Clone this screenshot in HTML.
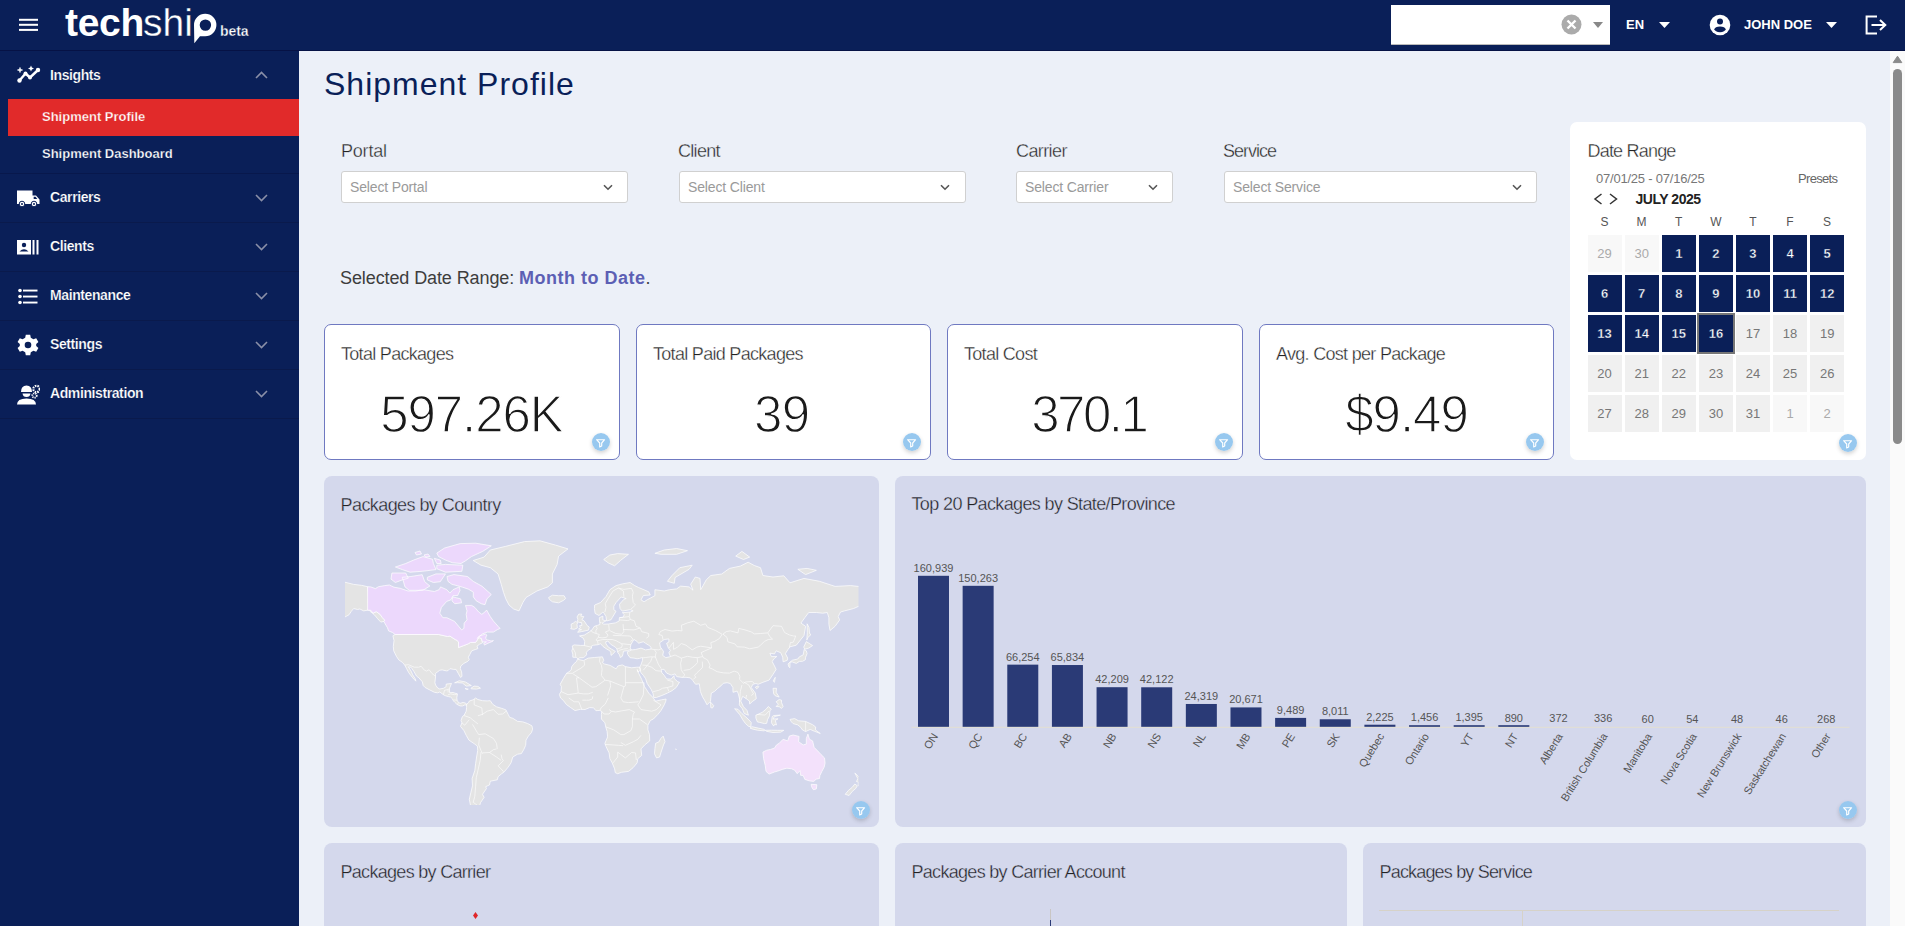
<!DOCTYPE html>
<html><head><meta charset="utf-8"><style>
*{box-sizing:border-box;margin:0;padding:0}
html,body{width:1905px;height:926px;overflow:hidden;background:#ecf0f8;font-family:"Liberation Sans",sans-serif}
.abs{position:absolute}
#hdr{position:absolute;left:0;top:0;width:1905px;height:51px;background:#0a1f58;border-bottom:1px solid #061245}
#side{position:absolute;left:0;top:51px;width:299px;height:875px;background:#0a1f58}
.nav{position:absolute;left:0;width:299px;height:49px;border-bottom:1px solid #0a1a4c;color:#fff;font-size:15px;font-weight:bold}
.nav .t{position:absolute;left:50px;top:-1px;line-height:48px;font-size:14px;letter-spacing:-0.4px;-webkit-text-stroke:0.2px #0a1f58}
.nav .ic{position:absolute;left:16px;top:14px;width:24px;height:22px}
.nav .chev{position:absolute;left:255px;top:20px}
.sub{position:absolute;left:42px;color:#fff;font-size:13px;font-weight:bold;line-height:15px}
.sel{position:absolute;top:171px;height:32px;background:#fff;border:1px solid #d0d0d0;border-radius:3px}
.kpi{position:absolute;top:324px;width:296px;height:136px;background:#fff;border:1px solid #6f79c1;border-radius:7px}
.card{position:absolute;background:#d4d8ec;border-radius:8px}
.fb{position:absolute;width:18px;height:18px}
</style></head><body>
<div id="hdr">
 <svg class="abs" style="left:19px;top:18px" width="19" height="14" viewBox="0 0 19 14"><rect x="0" y="0.8" width="19" height="2" fill="#fff"/><rect x="0" y="5.8" width="19" height="2" fill="#fff"/><rect x="0" y="10.9" width="19" height="2" fill="#fff"/></svg>
 <div class="abs" style="left:65px;top:3px;color:#fff;font-size:39px;line-height:39px;font-weight:bold;letter-spacing:-0.3px">tech</div>
 <div class="abs" style="left:143px;top:3px;color:#fff;font-size:39px;line-height:39px;-webkit-text-stroke:0.4px #0a1f58">shi</div>
 <svg class="abs" style="left:192px;top:12px" width="26" height="33" viewBox="0 0 26 33"><path fill="#fff" fill-rule="evenodd" d="M2 13 A11.2 11.2 0 1 1 13.2 24.2 H8 L2.3 31.2Z M13.4 7.4 A5.7 5.7 0 1 0 13.4 18.8 A5.7 5.7 0 1 0 13.4 7.4Z"/></svg>
 <div class="abs" style="left:220px;top:23px;color:#fff;font-size:14px;font-weight:bold;line-height:16px;letter-spacing:-0.1px;-webkit-text-stroke:0.3px #0a1f58">beta</div>
 <div class="abs" style="left:1391px;top:5px;width:219px;height:40px;background:#fff;border-bottom:1px solid #bbb"></div>
 <svg class="abs" style="left:1561px;top:14px" width="21" height="21" viewBox="0 0 21 21"><circle cx="10.5" cy="10.5" r="10" fill="#ababab"/><path d="M6.5 6.5 L14.5 14.5 M14.5 6.5 L6.5 14.5" stroke="#fff" stroke-width="2.4"/></svg>
 <svg class="abs" style="left:1593px;top:22px" width="10" height="6" viewBox="0 0 10 6"><path d="M0 0 H10 L5 6Z" fill="#888"/></svg>
 <div class="abs" style="left:1626px;top:17px;color:#fff;font-size:13px;font-weight:bold;line-height:15px">EN</div>
 <svg class="abs" style="left:1659px;top:22px" width="11" height="6" viewBox="0 0 11 6"><path d="M0 0 H11 L5.5 6Z" fill="#fff"/></svg>
 <svg class="abs" style="left:1709px;top:14px" width="22" height="22" viewBox="0 0 22 22"><circle cx="11" cy="11" r="10.3" fill="#fff"/><circle cx="11" cy="7.5" r="3" fill="#0a1f58"/><ellipse cx="11" cy="15.3" rx="5.6" ry="2.9" fill="#0a1f58"/></svg>
 <div class="abs" style="left:1744px;top:17px;color:#fff;font-size:13px;font-weight:bold;line-height:15px">JOHN DOE</div>
 <svg class="abs" style="left:1826px;top:22px" width="11" height="6" viewBox="0 0 11 6"><path d="M0 0 H11 L5.5 6Z" fill="#fff"/></svg>
 <svg class="abs" style="left:1865px;top:15px" width="23" height="20" viewBox="0 0 23 20"><path d="M12 1.6 H1.6 V18.4 H12" fill="none" stroke="#fff" stroke-width="2"/><path d="M6.5 10 H20 M15 5 L20.3 10 L15 15" fill="none" stroke="#fff" stroke-width="2"/></svg>
</div>
<div id="side">
 <div class="nav" style="top:0;height:48px;border:none">
  <svg class="ic" style="left:17px;top:12px" width="24" height="18" viewBox="0 0 24 18"><path d="M2.5 15.5 L8.5 8.5 L13 12.5 L21 5" fill="none" stroke="#fff" stroke-width="2.4" stroke-linecap="round" stroke-linejoin="round"/><circle cx="2.5" cy="15.5" r="2.2" fill="#fff"/><circle cx="8.5" cy="8.5" r="2" fill="#fff"/><circle cx="13" cy="12.5" r="2" fill="#fff"/><circle cx="21" cy="5" r="2.2" fill="#fff"/><path d="M14 0.5 L14.9 2.6 L17 3.5 L14.9 4.4 L14 6.5 L13.1 4.4 L11 3.5 L13.1 2.6Z" fill="#fff"/><path d="M3 2.5 V7.5 M0.5 5 H5.5" stroke="#fff" stroke-width="1.4"/></svg>
  <div class="t" style="top:0px">Insights</div>
  <svg class="chev" style="top:20px" width="13" height="8" viewBox="0 0 13 8"><path d="M1 7 L6.5 1.5 L12 7" fill="none" stroke="#8a8fa8" stroke-width="1.6"/></svg>
 </div>
 <div class="abs" style="left:8px;top:48px;width:291px;height:37px;background:#e12a2a"></div>
 <div class="sub" style="top:58px;-webkit-text-stroke:0.25px #e12a2a">Shipment Profile</div>
 <div class="sub" style="top:95px;-webkit-text-stroke:0.25px #0a1f58">Shipment Dashboard</div>
 <div class="abs" style="left:0;top:122px;width:299px;height:1px;background:#08184c"></div>
 <div class="nav" style="top:123px">
  <svg class="ic" style="top:13px" width="24" height="17" viewBox="0 0 24 17"><path d="M1 1 H16.5 V6 H20 L23.5 10 V14.5 H1Z" fill="#fff"/><path d="M17.7 7.3 H19.5 L21.3 9.5 H17.7Z" fill="#0a1f58"/><circle cx="6" cy="14.5" r="2.8" fill="#fff" stroke="#0a1f58" stroke-width="1"/><circle cx="18" cy="14.5" r="2.8" fill="#fff" stroke="#0a1f58" stroke-width="1"/><circle cx="6" cy="14.5" r="1" fill="#0a1f58"/><circle cx="18" cy="14.5" r="1" fill="#0a1f58"/></svg>
  <div class="t">Carriers</div>
  <svg class="chev" width="13" height="8" viewBox="0 0 13 8"><path d="M1 1 L6.5 6.5 L12 1" fill="none" stroke="#8a8fa8" stroke-width="1.6"/></svg>
 </div>
 <div class="nav" style="top:172px">
  <svg class="ic" style="top:12.5px" width="24" height="16" viewBox="0 0 24 16"><rect x="1" y="1" width="14" height="14.5" fill="#fff"/><circle cx="8" cy="6" r="2.2" fill="#0a1f58"/><path d="M3.5 12.5 Q8 8 12.5 12.5Z" fill="#0a1f58"/><rect x="16.5" y="1" width="2" height="14.5" fill="#fff"/><rect x="20.5" y="1" width="2" height="14.5" fill="#fff"/></svg>
  <div class="t">Clients</div>
  <svg class="chev" width="13" height="8" viewBox="0 0 13 8"><path d="M1 1 L6.5 6.5 L12 1" fill="none" stroke="#8a8fa8" stroke-width="1.6"/></svg>
 </div>
 <div class="nav" style="top:221px">
  <svg class="ic" style="top:12.5px" width="24" height="20" viewBox="0 0 24 20"><circle cx="4" cy="4.5" r="1.8" fill="#fff"/><circle cx="4" cy="10.5" r="1.8" fill="#fff"/><circle cx="4" cy="16.5" r="1.8" fill="#fff"/><rect x="7" y="3.6" width="14.5" height="1.9" fill="#fff"/><rect x="7" y="9.6" width="14.5" height="1.9" fill="#fff"/><rect x="7" y="15.6" width="14.5" height="1.9" fill="#fff"/></svg>
  <div class="t">Maintenance</div>
  <svg class="chev" width="13" height="8" viewBox="0 0 13 8"><path d="M1 1 L6.5 6.5 L12 1" fill="none" stroke="#8a8fa8" stroke-width="1.6"/></svg>
 </div>
 <div class="nav" style="top:270px">
  <svg class="ic" style="top:13px" width="24" height="22" viewBox="0 0 24 22"><g transform="translate(12 11)"><path d="M-2.2 -10.2 H2.2 L2.8 -7.3 L5.4 -5.8 L8.2 -6.8 L10.4 -3 L8.2 -1 V1 L10.4 3 L8.2 6.8 L5.4 5.8 L2.8 7.3 L2.2 10.2 H-2.2 L-2.8 7.3 L-5.4 5.8 L-8.2 6.8 L-10.4 3 L-8.2 1 V-1 L-10.4 -3 L-8.2 -6.8 L-5.4 -5.8 L-2.8 -7.3Z" fill="#fff"/><circle r="3.3" fill="#0a1f58"/></g></svg>
  <div class="t">Settings</div>
  <svg class="chev" width="13" height="8" viewBox="0 0 13 8"><path d="M1 1 L6.5 6.5 L12 1" fill="none" stroke="#8a8fa8" stroke-width="1.6"/></svg>
 </div>
 <div class="nav" style="top:319px">
  <svg class="ic" style="top:13px" width="24" height="22" viewBox="0 0 24 22"><path d="M5 9 Q5 2.5 10.5 2.5 Q16 2.5 16 9Z" fill="#fff"/><path d="M6.5 10.5 H14.5 Q14 14 10.5 14 Q7 14 6.5 10.5Z" fill="#fff"/><path d="M1 21.5 Q1 15.5 10.5 15.5 Q20 15.5 20 21.5Z" fill="#fff"/><circle cx="20.5" cy="6" r="3.2" fill="none" stroke="#fff" stroke-width="2.2" stroke-dasharray="1.6 1"/><circle cx="18.5" cy="12.5" r="2.2" fill="none" stroke="#fff" stroke-width="1.8" stroke-dasharray="1.2 0.8"/></svg>
  <div class="t">Administration</div>
  <svg class="chev" width="13" height="8" viewBox="0 0 13 8"><path d="M1 1 L6.5 6.5 L12 1" fill="none" stroke="#8a8fa8" stroke-width="1.6"/></svg>
 </div>
</div>

<div class="abs" style="left:1890px;top:51px;width:15px;height:875px;background:#fafafa"></div>
<svg class="abs" style="left:1892px;top:55px" width="11" height="9" viewBox="0 0 11 9"><path d="M1.2 7.6 L5.5 1.2 L9.8 7.6Z" fill="#8a8a8a" stroke="#8a8a8a" stroke-width="1" stroke-linejoin="round"/></svg>
<div class="abs" style="left:1893px;top:69px;width:9px;height:375px;background:#8a8a8a;border-radius:4.5px"></div>
<div class="abs" style="left:324.0px;top:67.7px;font-size:32px;line-height:32px;color:#0a1f58;letter-spacing:1.0px;font-weight:normal;white-space:nowrap;">Shipment Profile</div>
<div class="abs" style="left:341.0px;top:141.8px;font-size:18px;line-height:18px;color:#222;letter-spacing:-0.2px;font-weight:normal;white-space:nowrap;-webkit-text-stroke:0.35px #ecf0f8;">Portal</div>
<div class="abs" style="left:678.0px;top:141.8px;font-size:18px;line-height:18px;color:#222;letter-spacing:-0.7px;font-weight:normal;white-space:nowrap;-webkit-text-stroke:0.35px #ecf0f8;">Client</div>
<div class="abs" style="left:1016.0px;top:141.8px;font-size:18px;line-height:18px;color:#222;letter-spacing:-0.6px;font-weight:normal;white-space:nowrap;-webkit-text-stroke:0.35px #ecf0f8;">Carrier</div>
<div class="abs" style="left:1223.0px;top:141.8px;font-size:18px;line-height:18px;color:#222;letter-spacing:-1.0px;font-weight:normal;white-space:nowrap;-webkit-text-stroke:0.35px #ecf0f8;">Service</div>
<div class="sel" style="left:341px;width:287px"></div>
<div class="abs" style="left:350.0px;top:180.1px;font-size:14px;line-height:14px;color:#9a9a9a;letter-spacing:-0.15px;font-weight:normal;white-space:nowrap;">Select Portal</div>
<svg class="abs" style="left:602.5px;top:184px" width="10" height="7" viewBox="0 0 10 7"><path d="M1 1.2 L5 5.2 L9 1.2" fill="none" stroke="#555" stroke-width="1.6"/></svg>
<div class="sel" style="left:679px;width:287px"></div>
<div class="abs" style="left:688.0px;top:180.1px;font-size:14px;line-height:14px;color:#9a9a9a;letter-spacing:-0.15px;font-weight:normal;white-space:nowrap;">Select Client</div>
<svg class="abs" style="left:940px;top:184px" width="10" height="7" viewBox="0 0 10 7"><path d="M1 1.2 L5 5.2 L9 1.2" fill="none" stroke="#555" stroke-width="1.6"/></svg>
<div class="sel" style="left:1016px;width:157px"></div>
<div class="abs" style="left:1025.0px;top:180.1px;font-size:14px;line-height:14px;color:#9a9a9a;letter-spacing:-0.15px;font-weight:normal;white-space:nowrap;">Select Carrier</div>
<svg class="abs" style="left:1147.5px;top:184px" width="10" height="7" viewBox="0 0 10 7"><path d="M1 1.2 L5 5.2 L9 1.2" fill="none" stroke="#555" stroke-width="1.6"/></svg>
<div class="sel" style="left:1224px;width:313px"></div>
<div class="abs" style="left:1233.0px;top:180.1px;font-size:14px;line-height:14px;color:#9a9a9a;letter-spacing:-0.15px;font-weight:normal;white-space:nowrap;">Select Service</div>
<svg class="abs" style="left:1511.5px;top:184px" width="10" height="7" viewBox="0 0 10 7"><path d="M1 1.2 L5 5.2 L9 1.2" fill="none" stroke="#555" stroke-width="1.6"/></svg>
<div class="abs" style="left:340.0px;top:268.7px;font-size:18px;line-height:18px;color:#3d3d3d;letter-spacing:-0.1px;font-weight:normal;white-space:nowrap;">Selected Date Range: <span style="font-weight:bold;color:#5c5fb4;letter-spacing:0.5px">Month to Date</span>.</div>
<div class="kpi" style="left:324px;width:296px"></div>
<div class="abs" style="left:341.0px;top:344.8px;font-size:18px;line-height:18px;color:#222;letter-spacing:-0.7px;font-weight:normal;white-space:nowrap;-webkit-text-stroke:0.35px #fff;">Total Packages</div>
<div class="abs" style="left:324px;width:296px;top:388.7px;font-size:51px;line-height:51px;text-align:center;color:#1a1a1a;letter-spacing:-1.1px;text-indent:-1.1px;-webkit-text-stroke:1.3px #fff">597.26K</div>
<div class="kpi" style="left:636px;width:295px"></div>
<div class="abs" style="left:653.0px;top:344.8px;font-size:18px;line-height:18px;color:#222;letter-spacing:-0.7px;font-weight:normal;white-space:nowrap;-webkit-text-stroke:0.35px #fff;">Total Paid Packages</div>
<div class="abs" style="left:634px;width:296px;top:388.7px;font-size:51px;line-height:51px;text-align:center;color:#1a1a1a;letter-spacing:-0.6px;text-indent:-0.6px;-webkit-text-stroke:1.3px #fff">39</div>
<div class="kpi" style="left:947px;width:296px"></div>
<div class="abs" style="left:964.0px;top:344.8px;font-size:18px;line-height:18px;color:#222;letter-spacing:-0.7px;font-weight:normal;white-space:nowrap;-webkit-text-stroke:0.35px #fff;">Total Cost</div>
<div class="abs" style="left:942px;width:296px;top:388.7px;font-size:51px;line-height:51px;text-align:center;color:#1a1a1a;letter-spacing:-2.5px;text-indent:-2.5px;-webkit-text-stroke:1.3px #fff">370.1</div>
<div class="kpi" style="left:1259px;width:295px"></div>
<div class="abs" style="left:1276.0px;top:344.8px;font-size:18px;line-height:18px;color:#222;letter-spacing:-0.7px;font-weight:normal;white-space:nowrap;-webkit-text-stroke:0.35px #fff;">Avg. Cost per Package</div>
<div class="abs" style="left:1259px;width:296px;top:388.7px;font-size:51px;line-height:51px;text-align:center;color:#1a1a1a;letter-spacing:-1.0px;text-indent:-1.0px;-webkit-text-stroke:1.3px #fff">$9.49</div>
<div class="abs" style="left:592.0px;top:433.0px;width:18px;height:18px;border-radius:50%;box-shadow:0 2px 4px rgba(0,0,0,.18)"></div><svg class="fb" style="left:592.0px;top:433.0px" width="18" height="18" viewBox="0 0 18 18"><circle cx="9" cy="9" r="9" fill="#97c8ef"/><path d="M4.6 6.7 H12.6 L9.7 10 V13 L7.7 13.9 V10Z" fill="none" stroke="#fff" stroke-width="1.15" stroke-linejoin="round"/></svg>
<div class="abs" style="left:903.0px;top:433.0px;width:18px;height:18px;border-radius:50%;box-shadow:0 2px 4px rgba(0,0,0,.18)"></div><svg class="fb" style="left:903.0px;top:433.0px" width="18" height="18" viewBox="0 0 18 18"><circle cx="9" cy="9" r="9" fill="#97c8ef"/><path d="M4.6 6.7 H12.6 L9.7 10 V13 L7.7 13.9 V10Z" fill="none" stroke="#fff" stroke-width="1.15" stroke-linejoin="round"/></svg>
<div class="abs" style="left:1215.0px;top:433.0px;width:18px;height:18px;border-radius:50%;box-shadow:0 2px 4px rgba(0,0,0,.18)"></div><svg class="fb" style="left:1215.0px;top:433.0px" width="18" height="18" viewBox="0 0 18 18"><circle cx="9" cy="9" r="9" fill="#97c8ef"/><path d="M4.6 6.7 H12.6 L9.7 10 V13 L7.7 13.9 V10Z" fill="none" stroke="#fff" stroke-width="1.15" stroke-linejoin="round"/></svg>
<div class="abs" style="left:1526.0px;top:433.0px;width:18px;height:18px;border-radius:50%;box-shadow:0 2px 4px rgba(0,0,0,.18)"></div><svg class="fb" style="left:1526.0px;top:433.0px" width="18" height="18" viewBox="0 0 18 18"><circle cx="9" cy="9" r="9" fill="#97c8ef"/><path d="M4.6 6.7 H12.6 L9.7 10 V13 L7.7 13.9 V10Z" fill="none" stroke="#fff" stroke-width="1.15" stroke-linejoin="round"/></svg>
<div class="abs" style="left:1570px;top:122px;width:296px;height:338px;background:#fff;border-radius:7px"></div>
<div class="abs" style="left:1587.5px;top:142.0px;font-size:18px;line-height:18px;color:#222;letter-spacing:-0.8px;font-weight:normal;white-space:nowrap;-webkit-text-stroke:0.35px #fff;">Date Range</div>
<div class="abs" style="left:1596.0px;top:171.9px;font-size:13px;line-height:13px;color:#777;letter-spacing:-0.22px;font-weight:normal;white-space:nowrap;">07/01/25 - 07/16/25</div>
<div class="abs" style="left:1798.0px;top:171.9px;font-size:13px;line-height:13px;color:#666;letter-spacing:-0.68px;font-weight:normal;white-space:nowrap;">Presets</div>
<svg class="abs" style="left:1593px;top:193px" width="26" height="12" viewBox="0 0 26 12"><path d="M8.5 1 L2 6 L8.5 11 M17 1 L23.5 6 L17 11" fill="none" stroke="#333" stroke-width="1.5"/></svg>
<div class="abs" style="left:1635.5px;top:192.1px;font-size:14px;line-height:14px;color:#222;letter-spacing:-0.46px;font-weight:bold;white-space:nowrap;">JULY 2025</div>
<div class="abs" style="left:1589.5px;top:215.8px;width:30px;text-align:center;font-size:12px;line-height:12px;color:#555">S</div>
<div class="abs" style="left:1626.6px;top:215.8px;width:30px;text-align:center;font-size:12px;line-height:12px;color:#555">M</div>
<div class="abs" style="left:1663.7px;top:215.8px;width:30px;text-align:center;font-size:12px;line-height:12px;color:#555">T</div>
<div class="abs" style="left:1700.8px;top:215.8px;width:30px;text-align:center;font-size:12px;line-height:12px;color:#555">W</div>
<div class="abs" style="left:1737.9px;top:215.8px;width:30px;text-align:center;font-size:12px;line-height:12px;color:#555">T</div>
<div class="abs" style="left:1775.0px;top:215.8px;width:30px;text-align:center;font-size:12px;line-height:12px;color:#555">F</div>
<div class="abs" style="left:1812.1px;top:215.8px;width:30px;text-align:center;font-size:12px;line-height:12px;color:#555">S</div>
<div class="abs" style="left:1587.5px;top:235px;width:34.2px;height:37px;background:#f8f8f8;color:#aaa;text-align:center;line-height:37px;font-size:13px">29</div>
<div class="abs" style="left:1624.6px;top:235px;width:34.2px;height:37px;background:#f8f8f8;color:#aaa;text-align:center;line-height:37px;font-size:13px">30</div>
<div class="abs" style="left:1661.7px;top:235px;width:34.2px;height:37px;background:#0a1f58;color:#fff;font-weight:bold;-webkit-text-stroke:0.35px #0a1f58;text-align:center;line-height:37px;font-size:13px">1</div>
<div class="abs" style="left:1698.8px;top:235px;width:34.2px;height:37px;background:#0a1f58;color:#fff;font-weight:bold;-webkit-text-stroke:0.35px #0a1f58;text-align:center;line-height:37px;font-size:13px">2</div>
<div class="abs" style="left:1735.9px;top:235px;width:34.2px;height:37px;background:#0a1f58;color:#fff;font-weight:bold;-webkit-text-stroke:0.35px #0a1f58;text-align:center;line-height:37px;font-size:13px">3</div>
<div class="abs" style="left:1773.0px;top:235px;width:34.2px;height:37px;background:#0a1f58;color:#fff;font-weight:bold;-webkit-text-stroke:0.35px #0a1f58;text-align:center;line-height:37px;font-size:13px">4</div>
<div class="abs" style="left:1810.1px;top:235px;width:34.2px;height:37px;background:#0a1f58;color:#fff;font-weight:bold;-webkit-text-stroke:0.35px #0a1f58;text-align:center;line-height:37px;font-size:13px">5</div>
<div class="abs" style="left:1587.5px;top:275px;width:34.2px;height:37px;background:#0a1f58;color:#fff;font-weight:bold;-webkit-text-stroke:0.35px #0a1f58;text-align:center;line-height:37px;font-size:13px">6</div>
<div class="abs" style="left:1624.6px;top:275px;width:34.2px;height:37px;background:#0a1f58;color:#fff;font-weight:bold;-webkit-text-stroke:0.35px #0a1f58;text-align:center;line-height:37px;font-size:13px">7</div>
<div class="abs" style="left:1661.7px;top:275px;width:34.2px;height:37px;background:#0a1f58;color:#fff;font-weight:bold;-webkit-text-stroke:0.35px #0a1f58;text-align:center;line-height:37px;font-size:13px">8</div>
<div class="abs" style="left:1698.8px;top:275px;width:34.2px;height:37px;background:#0a1f58;color:#fff;font-weight:bold;-webkit-text-stroke:0.35px #0a1f58;text-align:center;line-height:37px;font-size:13px">9</div>
<div class="abs" style="left:1735.9px;top:275px;width:34.2px;height:37px;background:#0a1f58;color:#fff;font-weight:bold;-webkit-text-stroke:0.35px #0a1f58;text-align:center;line-height:37px;font-size:13px">10</div>
<div class="abs" style="left:1773.0px;top:275px;width:34.2px;height:37px;background:#0a1f58;color:#fff;font-weight:bold;-webkit-text-stroke:0.35px #0a1f58;text-align:center;line-height:37px;font-size:13px">11</div>
<div class="abs" style="left:1810.1px;top:275px;width:34.2px;height:37px;background:#0a1f58;color:#fff;font-weight:bold;-webkit-text-stroke:0.35px #0a1f58;text-align:center;line-height:37px;font-size:13px">12</div>
<div class="abs" style="left:1587.5px;top:315px;width:34.2px;height:37px;background:#0a1f58;color:#fff;font-weight:bold;-webkit-text-stroke:0.35px #0a1f58;text-align:center;line-height:37px;font-size:13px">13</div>
<div class="abs" style="left:1624.6px;top:315px;width:34.2px;height:37px;background:#0a1f58;color:#fff;font-weight:bold;-webkit-text-stroke:0.35px #0a1f58;text-align:center;line-height:37px;font-size:13px">14</div>
<div class="abs" style="left:1661.7px;top:315px;width:34.2px;height:37px;background:#0a1f58;color:#fff;font-weight:bold;-webkit-text-stroke:0.35px #0a1f58;text-align:center;line-height:37px;font-size:13px">15</div>
<div class="abs" style="left:1698.8px;top:315px;width:34.2px;height:37px;background:#0a1f58;color:#fff;font-weight:bold;-webkit-text-stroke:0.35px #0a1f58;outline:2px solid #777;text-align:center;line-height:37px;font-size:13px">16</div>
<div class="abs" style="left:1735.9px;top:315px;width:34.2px;height:37px;background:#f0f0f0;color:#777;text-align:center;line-height:37px;font-size:13px">17</div>
<div class="abs" style="left:1773.0px;top:315px;width:34.2px;height:37px;background:#f0f0f0;color:#777;text-align:center;line-height:37px;font-size:13px">18</div>
<div class="abs" style="left:1810.1px;top:315px;width:34.2px;height:37px;background:#f0f0f0;color:#777;text-align:center;line-height:37px;font-size:13px">19</div>
<div class="abs" style="left:1587.5px;top:355px;width:34.2px;height:37px;background:#f0f0f0;color:#777;text-align:center;line-height:37px;font-size:13px">20</div>
<div class="abs" style="left:1624.6px;top:355px;width:34.2px;height:37px;background:#f0f0f0;color:#777;text-align:center;line-height:37px;font-size:13px">21</div>
<div class="abs" style="left:1661.7px;top:355px;width:34.2px;height:37px;background:#f0f0f0;color:#777;text-align:center;line-height:37px;font-size:13px">22</div>
<div class="abs" style="left:1698.8px;top:355px;width:34.2px;height:37px;background:#f0f0f0;color:#777;text-align:center;line-height:37px;font-size:13px">23</div>
<div class="abs" style="left:1735.9px;top:355px;width:34.2px;height:37px;background:#f0f0f0;color:#777;text-align:center;line-height:37px;font-size:13px">24</div>
<div class="abs" style="left:1773.0px;top:355px;width:34.2px;height:37px;background:#f0f0f0;color:#777;text-align:center;line-height:37px;font-size:13px">25</div>
<div class="abs" style="left:1810.1px;top:355px;width:34.2px;height:37px;background:#f0f0f0;color:#777;text-align:center;line-height:37px;font-size:13px">26</div>
<div class="abs" style="left:1587.5px;top:395px;width:34.2px;height:37px;background:#f0f0f0;color:#777;text-align:center;line-height:37px;font-size:13px">27</div>
<div class="abs" style="left:1624.6px;top:395px;width:34.2px;height:37px;background:#f0f0f0;color:#777;text-align:center;line-height:37px;font-size:13px">28</div>
<div class="abs" style="left:1661.7px;top:395px;width:34.2px;height:37px;background:#f0f0f0;color:#777;text-align:center;line-height:37px;font-size:13px">29</div>
<div class="abs" style="left:1698.8px;top:395px;width:34.2px;height:37px;background:#f0f0f0;color:#777;text-align:center;line-height:37px;font-size:13px">30</div>
<div class="abs" style="left:1735.9px;top:395px;width:34.2px;height:37px;background:#f0f0f0;color:#777;text-align:center;line-height:37px;font-size:13px">31</div>
<div class="abs" style="left:1773.0px;top:395px;width:34.2px;height:37px;background:#f8f8f8;color:#aaa;text-align:center;line-height:37px;font-size:13px">1</div>
<div class="abs" style="left:1810.1px;top:395px;width:34.2px;height:37px;background:#f8f8f8;color:#aaa;text-align:center;line-height:37px;font-size:13px">2</div>
<div class="abs" style="left:1839.0px;top:434.0px;width:18px;height:18px;border-radius:50%;box-shadow:0 2px 4px rgba(0,0,0,.18)"></div><svg class="fb" style="left:1839.0px;top:434.0px" width="18" height="18" viewBox="0 0 18 18"><circle cx="9" cy="9" r="9" fill="#97c8ef"/><path d="M4.6 6.7 H12.6 L9.7 10 V13 L7.7 13.9 V10Z" fill="none" stroke="#fff" stroke-width="1.15" stroke-linejoin="round"/></svg>
<div class="card" style="left:324px;top:476px;width:555px;height:351px"></div>
<div class="abs" style="left:340.5px;top:495.5px;font-size:18px;line-height:18px;color:#222;letter-spacing:-0.57px;font-weight:normal;white-space:nowrap;-webkit-text-stroke:0.35px #d4d8ec;">Packages by Country</div>
<div class="card" style="left:895px;top:476px;width:971px;height:351px"></div>
<div class="abs" style="left:911.5px;top:495.4px;font-size:18px;line-height:18px;color:#222;letter-spacing:-0.63px;font-weight:normal;white-space:nowrap;-webkit-text-stroke:0.35px #d4d8ec;">Top 20 Packages by State/Province</div>
<div class="card" style="left:324px;top:843px;width:555px;height:200px"></div>
<div class="abs" style="left:340.5px;top:862.9px;font-size:18px;line-height:18px;color:#222;letter-spacing:-0.7px;font-weight:normal;white-space:nowrap;-webkit-text-stroke:0.35px #d4d8ec;">Packages by Carrier</div>
<div class="card" style="left:895px;top:843px;width:452px;height:200px"></div>
<div class="abs" style="left:911.5px;top:862.9px;font-size:18px;line-height:18px;color:#222;letter-spacing:-0.7px;font-weight:normal;white-space:nowrap;-webkit-text-stroke:0.35px #d4d8ec;">Packages by Carrier Account</div>
<div class="card" style="left:1363px;top:843px;width:503px;height:200px"></div>
<div class="abs" style="left:1379.5px;top:862.9px;font-size:18px;line-height:18px;color:#222;letter-spacing:-0.82px;font-weight:normal;white-space:nowrap;-webkit-text-stroke:0.35px #d4d8ec;">Packages by Service</div>
<svg class="abs" style="left:0;top:0" width="1905" height="926" viewBox="0 0 1905 926" font-family="Liberation Sans" font-size="11">
<rect x="911.5" y="726.8" width="938" height="1" fill="#e3dfd2"/>
<rect x="918.00" y="575.80" width="31" height="151.00" fill="#2a3a76"/>
<text x="933.50" y="571.80" text-anchor="middle" fill="#555">160,939</text>
<text x="938.30" y="736.30" text-anchor="end" fill="#555" letter-spacing="-0.15" transform="rotate(-58 938.30 736.30)">ON</text>
<rect x="962.64" y="585.82" width="31" height="140.98" fill="#2a3a76"/>
<text x="978.14" y="581.82" text-anchor="middle" fill="#555">150,263</text>
<text x="982.94" y="736.30" text-anchor="end" fill="#555" letter-spacing="-0.15" transform="rotate(-58 982.94 736.30)">QC</text>
<rect x="1007.28" y="664.64" width="31" height="62.16" fill="#2a3a76"/>
<text x="1022.78" y="660.64" text-anchor="middle" fill="#555">66,254</text>
<text x="1027.58" y="736.30" text-anchor="end" fill="#555" letter-spacing="-0.15" transform="rotate(-58 1027.58 736.30)">BC</text>
<rect x="1051.92" y="665.03" width="31" height="61.77" fill="#2a3a76"/>
<text x="1067.42" y="661.03" text-anchor="middle" fill="#555">65,834</text>
<text x="1072.22" y="736.30" text-anchor="end" fill="#555" letter-spacing="-0.15" transform="rotate(-58 1072.22 736.30)">AB</text>
<rect x="1096.56" y="687.20" width="31" height="39.60" fill="#2a3a76"/>
<text x="1112.06" y="683.20" text-anchor="middle" fill="#555">42,209</text>
<text x="1116.86" y="736.30" text-anchor="end" fill="#555" letter-spacing="-0.15" transform="rotate(-58 1116.86 736.30)">NB</text>
<rect x="1141.20" y="687.28" width="31" height="39.52" fill="#2a3a76"/>
<text x="1156.70" y="683.28" text-anchor="middle" fill="#555">42,122</text>
<text x="1161.50" y="736.30" text-anchor="end" fill="#555" letter-spacing="-0.15" transform="rotate(-58 1161.50 736.30)">NS</text>
<rect x="1185.84" y="703.98" width="31" height="22.82" fill="#2a3a76"/>
<text x="1201.34" y="699.98" text-anchor="middle" fill="#555">24,319</text>
<text x="1206.14" y="736.30" text-anchor="end" fill="#555" letter-spacing="-0.15" transform="rotate(-58 1206.14 736.30)">NL</text>
<rect x="1230.48" y="707.41" width="31" height="19.39" fill="#2a3a76"/>
<text x="1245.98" y="703.41" text-anchor="middle" fill="#555">20,671</text>
<text x="1250.78" y="736.30" text-anchor="end" fill="#555" letter-spacing="-0.15" transform="rotate(-58 1250.78 736.30)">MB</text>
<rect x="1275.12" y="717.90" width="31" height="8.90" fill="#2a3a76"/>
<text x="1290.62" y="713.90" text-anchor="middle" fill="#555">9,489</text>
<text x="1295.42" y="736.30" text-anchor="end" fill="#555" letter-spacing="-0.15" transform="rotate(-58 1295.42 736.30)">PE</text>
<rect x="1319.76" y="719.28" width="31" height="7.52" fill="#2a3a76"/>
<text x="1335.26" y="715.28" text-anchor="middle" fill="#555">8,011</text>
<text x="1340.06" y="736.30" text-anchor="end" fill="#555" letter-spacing="-0.15" transform="rotate(-58 1340.06 736.30)">SK</text>
<rect x="1364.40" y="724.71" width="31" height="2.09" fill="#2a3a76"/>
<text x="1379.90" y="720.71" text-anchor="middle" fill="#555">2,225</text>
<text x="1384.70" y="736.30" text-anchor="end" fill="#555" letter-spacing="-0.15" transform="rotate(-58 1384.70 736.30)">Quebec</text>
<rect x="1409.04" y="725.20" width="31" height="1.60" fill="#2a3a76"/>
<text x="1424.54" y="721.43" text-anchor="middle" fill="#555">1,456</text>
<text x="1429.34" y="736.30" text-anchor="end" fill="#555" letter-spacing="-0.15" transform="rotate(-58 1429.34 736.30)">Ontario</text>
<rect x="1453.68" y="725.20" width="31" height="1.60" fill="#2a3a76"/>
<text x="1469.18" y="721.49" text-anchor="middle" fill="#555">1,395</text>
<text x="1473.98" y="736.30" text-anchor="end" fill="#555" letter-spacing="-0.15" transform="rotate(-58 1473.98 736.30)">YT</text>
<rect x="1498.32" y="725.20" width="31" height="1.60" fill="#2a3a76"/>
<text x="1513.82" y="721.96" text-anchor="middle" fill="#555">890</text>
<text x="1518.62" y="736.30" text-anchor="end" fill="#555" letter-spacing="-0.15" transform="rotate(-58 1518.62 736.30)">NT</text>
<text x="1558.46" y="722.45" text-anchor="middle" fill="#555">372</text>
<text x="1563.26" y="736.30" text-anchor="end" fill="#555" letter-spacing="-0.15" transform="rotate(-58 1563.26 736.30)">Alberta</text>
<text x="1603.10" y="722.48" text-anchor="middle" fill="#555">336</text>
<text x="1607.90" y="736.30" text-anchor="end" fill="#555" letter-spacing="-0.15" transform="rotate(-58 1607.90 736.30)">British Columbia</text>
<text x="1647.74" y="722.74" text-anchor="middle" fill="#555">60</text>
<text x="1652.54" y="736.30" text-anchor="end" fill="#555" letter-spacing="-0.15" transform="rotate(-58 1652.54 736.30)">Manitoba</text>
<text x="1692.38" y="722.75" text-anchor="middle" fill="#555">54</text>
<text x="1697.18" y="736.30" text-anchor="end" fill="#555" letter-spacing="-0.15" transform="rotate(-58 1697.18 736.30)">Nova Scotia</text>
<text x="1737.02" y="722.75" text-anchor="middle" fill="#555">48</text>
<text x="1741.82" y="736.30" text-anchor="end" fill="#555" letter-spacing="-0.15" transform="rotate(-58 1741.82 736.30)">New Brunswick</text>
<text x="1781.66" y="722.76" text-anchor="middle" fill="#555">46</text>
<text x="1786.46" y="736.30" text-anchor="end" fill="#555" letter-spacing="-0.15" transform="rotate(-58 1786.46 736.30)">Saskatchewan</text>
<text x="1826.30" y="722.55" text-anchor="middle" fill="#555">268</text>
<text x="1831.10" y="736.30" text-anchor="end" fill="#555" letter-spacing="-0.15" transform="rotate(-58 1831.10 736.30)">Other</text>
</svg>
<svg class="abs" style="left:0;top:0" width="1905" height="926" viewBox="0 0 1905 926">
<defs><clipPath id="mc"><rect x="345" y="530" width="513.5" height="275"/></clipPath></defs>
<g clip-path="url(#mc)" stroke="#fff" stroke-width="0.7" stroke-linejoin="round">
<path fill="#e4e4e4" d="M367.6 586.7 L361.4 585.3 L353.7 584.4 L343.6 581.9 L335.0 585.0 L328.8 588.6 L331.9 593.7 L330.4 597.5 L337.3 600.0 L331.1 603.7 L329.6 608.5 L335.0 611.3 L341.2 613.9 L343.6 617.7 L349.0 614.8 L351.3 611.3 L353.7 608.5 L357.5 609.5 L359.9 609.0 L363.7 610.9 L367.6 610.2 L370.7 610.2 L373.1 613.2 L376.2 611.6 L380.1 614.3 L382.4 617.7 L384.7 620.1 L383.9 621.4 L380.8 622.1 L377.7 618.8 L374.6 615.0 L370.0 611.3Z M395.1 634.5 L392.9 635.7 L394.0 640.5 L393.3 646.6 L393.7 650.8 L396.4 656.3 L398.7 659.8 L402.6 662.5 L404.7 665.1 L406.5 668.5 L408.8 672.8 L412.7 677.8 L415.9 681.2 L415.3 678.9 L412.7 674.8 L411.1 671.1 L408.3 666.8 L411.1 667.3 L414.2 671.9 L416.5 676.1 L418.9 677.8 L422.4 681.9 L423.1 685.4 L425.1 687.5 L429.7 689.9 L434.4 692.3 L437.5 692.8 L439.8 692.0 L443.4 694.7 L445.3 695.7 L448.4 696.6 L450.7 697.1 L452.3 698.7 L453.5 701.0 L454.6 702.1 L456.9 704.3 L460.0 705.9 L462.4 706.0 L464.8 704.9 L466.4 705.1 L466.7 704.2 L465.8 703.2 L463.1 702.4 L460.0 703.4 L457.2 701.0 L456.8 697.9 L457.4 693.9 L453.0 692.5 L449.6 692.7 L449.5 688.3 L451.5 683.5 L446.2 684.1 L446.1 686.7 L443.7 688.2 L439.8 689.0 L437.7 688.0 L435.6 685.1 L434.9 682.7 L435.6 676.3 L435.3 673.6 L439.8 670.2 L442.2 669.9 L446.5 670.9 L448.1 670.6 L449.9 668.7 L453.8 669.4 L456.1 669.4 L458.2 673.3 L460.5 677.4 L462.0 676.4 L461.6 671.9 L460.3 668.5 L460.8 666.0 L463.9 663.4 L467.8 661.3 L469.3 659.8 L468.3 657.2 L469.8 654.5 L471.7 650.8 L475.6 649.4 L477.9 648.6 L477.0 646.2 L479.4 644.3 L482.5 642.8 L481.3 638.3 L479.1 637.7 L477.9 639.1 L475.6 642.4 L470.6 642.4 L468.1 643.9 L463.6 645.6 L458.6 647.5 L458.5 641.8 L456.8 640.3 L455.2 639.5 L449.9 636.1 L447.6 636.5 L438.8 634.5Z M473.2 560.5 L484.1 557.1 L490.3 550.0 L505.8 546.3 L524.5 541.6 L540.0 540.8 L555.5 545.1 L568.0 548.9 L558.6 556.1 L557.1 564.5 L552.4 574.0 L552.4 582.8 L547.8 586.9 L536.9 591.0 L526.0 597.5 L522.9 602.5 L519.0 610.9 L513.6 609.0 L509.0 605.0 L505.8 598.8 L503.5 592.3 L501.2 584.2 L498.1 574.0 L490.3 567.7 L481.0 565.2Z M548.6 597.5 L552.4 595.2 L558.6 595.7 L564.1 595.7 L565.6 598.5 L563.3 600.5 L558.6 602.8 L552.4 601.8 L549.3 599.3Z M454.6 682.8 L459.3 680.7 L465.5 682.0 L471.4 685.6 L466.2 686.1 L462.4 683.0 L457.7 682.7Z M470.9 688.3 L474.0 686.1 L477.9 686.4 L480.5 688.2 L476.3 689.1 L471.2 688.8Z M465.0 688.5 L468.3 689.1 L467.0 689.5Z M466.6 704.2 L468.6 702.6 L469.3 701.0 L473.2 699.8 L475.6 698.0 L477.9 699.5 L482.5 700.7 L487.2 700.9 L490.3 700.7 L492.6 704.2 L496.5 706.8 L501.2 708.2 L505.8 709.8 L508.2 714.4 L509.7 717.4 L512.8 718.3 L517.5 721.3 L522.9 721.9 L527.6 723.5 L531.9 725.8 L532.6 729.1 L531.5 732.5 L528.4 736.1 L526.0 740.1 L525.7 745.3 L523.7 749.7 L521.4 753.6 L517.5 754.2 L512.8 757.0 L511.0 762.9 L508.2 767.1 L504.3 771.8 L501.2 774.1 L498.1 776.7 L497.3 779.8 L490.3 781.2 L489.5 784.9 L485.7 786.7 L486.4 788.6 L482.5 794.3 L484.1 797.3 L480.5 802.7 L479.4 806.4 L480.2 809.5 L483.3 812.7 L477.9 813.2 L474.0 810.6 L470.9 807.4 L469.3 799.3 L470.9 792.4 L472.5 785.8 L472.1 778.5 L474.8 770.6 L475.6 763.7 L476.6 757.0 L477.7 750.5 L477.4 746.1 L474.8 744.1 L468.9 740.1 L466.2 735.3 L463.9 730.6 L460.5 726.4 L461.9 722.8 L461.0 720.5 L462.4 716.6 L464.2 715.1 L466.2 711.2 L466.6 707.3Z M577.4 659.3 L583.5 660.6 L588.2 658.1 L594.4 657.5 L602.4 656.8 L603.8 660.4 L602.4 662.5 L604.5 664.0 L610.2 665.4 L616.1 668.9 L617.8 666.0 L622.3 664.9 L625.4 666.6 L631.6 667.8 L636.8 667.2 L639.7 667.2 L640.8 670.2 L637.8 671.9 L637.2 669.5 L638.8 673.6 L641.7 679.4 L644.5 686.7 L646.5 689.5 L648.7 693.1 L652.6 697.1 L653.8 698.8 L655.7 701.2 L661.1 699.9 L666.1 699.0 L665.8 701.2 L664.2 704.9 L661.1 710.4 L658.0 714.3 L653.4 719.0 L650.3 720.5 L647.9 725.2 L647.9 729.9 L649.5 734.6 L649.7 740.9 L644.8 744.9 L641.0 748.9 L641.7 755.4 L637.8 758.7 L637.1 762.9 L633.2 767.6 L628.5 771.4 L621.5 772.3 L617.7 773.7 L615.3 772.7 L614.6 768.8 L612.2 762.9 L609.9 758.7 L609.1 752.9 L606.0 746.5 L604.9 743.3 L607.6 736.9 L607.1 731.4 L605.7 726.7 L604.9 722.8 L601.4 719.0 L601.4 714.3 L601.8 711.5 L599.8 710.4 L595.9 710.7 L593.6 707.8 L589.7 707.6 L585.0 709.5 L580.4 709.3 L575.0 710.6 L570.3 707.3 L566.4 704.5 L563.3 700.4 L560.5 697.9 L559.4 694.4 L561.0 691.5 L561.4 686.7 L560.2 684.3 L563.3 678.6 L566.4 673.6 L571.1 670.2 L571.7 666.8 L574.2 663.4 L576.5 661.6Z M663.2 736.1 L665.0 741.7 L663.5 744.9 L661.1 752.1 L659.6 757.0 L656.5 757.9 L654.5 753.8 L654.9 748.9 L655.6 743.3 L658.8 742.0 L660.8 738.5Z M577.9 659.0 L576.5 657.4 L572.8 657.2 L572.8 654.1 L571.8 650.8 L572.8 648.1 L572.2 646.0 L574.2 644.9 L580.4 645.4 L584.3 645.4 L584.7 641.4 L583.2 638.1 L579.5 635.9 L584.3 635.1 L586.8 633.5 L589.1 632.1 L592.0 629.9 L594.1 626.5 L597.5 625.3 L600.0 624.4 L599.5 621.0 L599.3 617.7 L602.9 616.1 L602.8 619.9 L606.0 620.8 L602.1 623.1 L603.7 624.2 L608.3 624.0 L615.3 622.9 L619.2 621.0 L619.4 617.7 L623.1 617.2 L624.3 614.6 L622.3 612.7 L630.1 612.0 L633.2 610.9 L630.1 609.7 L622.3 611.1 L620.0 608.5 L619.5 604.2 L623.9 599.3 L626.2 598.5 L621.1 597.0 L616.1 602.5 L613.8 606.2 L613.8 609.7 L616.0 611.3 L612.2 617.7 L611.1 619.7 L606.6 621.0 L606.0 616.6 L604.0 613.2 L602.9 612.0 L599.0 615.5 L595.1 613.4 L594.4 608.5 L594.7 605.0 L600.6 602.5 L606.0 596.5 L609.9 589.7 L616.1 585.6 L622.3 583.9 L630.1 582.5 L634.7 585.6 L638.6 587.5 L648.7 591.8 L650.3 595.0 L643.3 595.5 L641.0 599.8 L644.1 601.8 L647.2 599.8 L654.9 595.7 L654.9 589.7 L664.2 591.0 L669.7 589.7 L676.7 588.9 L680.6 586.1 L689.1 586.9 L693.0 590.2 L690.7 584.2 L695.3 577.0 L700.0 578.4 L700.7 589.7 L703.1 585.6 L706.2 579.9 L710.8 575.5 L721.7 574.0 L729.5 568.4 L740.3 566.1 L748.1 562.2 L754.3 565.5 L760.5 567.7 L762.9 575.5 L773.0 577.0 L783.8 575.8 L790.0 582.8 L804.0 578.4 L819.5 581.3 L835.1 586.4 L850.6 585.6 L863.0 586.9 L866.1 588.9 L866.1 597.5 L863.0 600.0 L861.5 605.0 L853.7 608.5 L844.4 610.9 L840.5 612.0 L838.2 616.6 L839.7 619.9 L835.1 626.3 L830.0 630.5 L828.9 624.2 L828.9 617.7 L827.3 612.5 L822.7 613.2 L816.4 612.5 L808.7 612.5 L804.8 617.7 L800.9 623.1 L805.6 626.3 L804.0 635.5 L796.3 645.2 L790.0 646.8 L787.7 649.9 L785.4 653.6 L787.7 658.1 L787.2 660.4 L783.1 661.8 L782.7 657.2 L780.7 652.7 L776.1 650.8 L774.5 653.9 L769.9 653.2 L771.4 656.6 L776.8 656.5 L773.7 659.0 L772.2 661.6 L774.5 666.0 L776.1 669.4 L773.0 674.4 L769.1 680.1 L762.9 682.3 L758.2 684.3 L755.9 683.5 L752.8 684.3 L751.2 687.5 L755.4 693.1 L756.3 698.7 L752.8 701.2 L749.7 704.0 L749.4 701.0 L745.8 698.4 L742.7 696.3 L740.7 701.0 L743.5 706.8 L747.0 710.4 L748.4 715.2 L744.2 713.5 L742.4 708.8 L739.3 704.9 L739.7 699.5 L738.3 693.9 L737.2 691.1 L733.0 692.3 L732.9 687.5 L730.3 683.5 L727.1 682.7 L723.3 683.3 L720.9 685.9 L717.8 688.3 L714.4 691.5 L711.3 693.1 L710.8 697.9 L710.5 701.3 L707.0 704.8 L704.6 700.2 L702.5 696.8 L700.4 691.5 L699.7 686.7 L699.3 683.8 L695.6 684.3 L693.8 682.0 L692.5 680.1 L690.3 677.9 L686.0 677.3 L682.1 677.4 L676.7 676.6 L675.1 673.9 L671.2 675.1 L666.6 673.1 L664.2 669.4 L661.1 669.4 L661.9 672.8 L664.2 675.3 L666.6 678.9 L671.2 679.1 L674.0 675.6 L674.3 678.6 L677.9 681.9 L679.5 682.2 L676.2 687.5 L672.0 690.7 L667.4 693.1 L661.9 695.5 L656.5 697.4 L653.8 697.6 L652.9 693.1 L651.0 689.1 L647.2 683.5 L645.6 678.6 L643.3 675.3 L641.0 672.8 L640.2 670.2 L639.7 667.2 L640.8 665.1 L642.4 660.7 L642.5 657.5 L639.4 658.4 L637.1 658.8 L634.0 658.1 L630.1 657.7 L627.8 654.5 L627.3 651.8 L629.3 651.0 L631.8 649.9 L635.5 649.5 L641.0 648.1 L645.6 649.9 L651.0 649.0 L651.0 647.1 L648.7 645.2 L645.6 643.3 L643.3 641.8 L641.0 642.4 L638.6 643.3 L637.1 641.4 L634.0 639.5 L632.4 642.0 L630.9 644.7 L630.1 648.1 L631.5 649.4 L629.3 649.9 L627.3 650.7 L623.4 651.2 L623.1 653.6 L622.3 656.3 L620.3 657.5 L619.5 654.9 L617.7 652.3 L616.9 649.0 L615.3 647.1 L610.7 644.3 L607.9 641.0 L605.7 641.8 L606.0 643.9 L608.3 647.1 L611.4 649.0 L615.3 651.4 L612.4 654.5 L611.0 655.4 L610.8 651.8 L608.3 649.9 L606.0 648.6 L602.9 646.4 L600.6 643.7 L598.2 644.7 L593.6 645.2 L591.3 646.2 L591.6 648.2 L587.8 650.5 L586.1 652.9 L586.9 654.1 L585.5 656.1 L583.3 657.7 L579.8 657.7Z M577.7 632.3 L581.2 631.7 L588.6 630.1 L589.2 627.0 L587.1 625.5 L586.3 624.2 L584.1 620.8 L581.9 619.9 L583.8 616.6 L580.7 616.1 L581.9 614.1 L578.8 614.1 L577.0 617.0 L577.9 619.2 L577.3 621.6 L579.5 622.5 L581.5 622.5 L581.9 625.5 L579.5 625.7 L580.4 627.8 L578.5 629.0 L581.6 629.7 L578.8 630.5Z M577.3 628.0 L577.0 624.4 L577.7 622.5 L575.3 621.4 L573.4 623.1 L571.1 624.2 L571.4 628.0 L570.6 628.8 L574.2 629.3Z M603.7 559.5 L609.9 555.0 L617.7 553.6 L628.5 554.3 L620.8 560.2 L614.6 565.8 L608.3 562.9Z M667.4 581.3 L672.0 575.5 L679.8 567.7 L692.2 565.2 L689.1 569.3 L675.1 577.5 L674.3 583.3Z M735.7 556.1 L741.9 551.4 L749.7 557.1 L743.5 559.5Z M797.8 569.3 L807.1 568.4 L816.4 570.3 L805.6 574.6Z M807.1 623.8 L809.0 627.4 L809.5 633.5 L811.0 634.5 L807.9 637.5 L806.8 640.1 L807.3 632.9Z M775.3 677.3 L774.5 682.3 L773.1 681.0Z M755.3 687.2 L758.2 685.8 L759.0 686.7 L756.7 688.8Z M710.5 702.1 L713.8 705.7 L712.4 708.1 L710.8 707.6Z M734.6 708.7 L738.0 709.3 L741.9 713.5 L748.1 719.0 L751.2 722.4 L750.9 726.4 L748.9 726.6 L745.5 723.6 L742.7 719.7 L739.9 714.8Z M750.0 728.0 L752.0 726.7 L758.2 728.1 L764.4 729.4 L764.4 730.9 L757.4 730.2 L752.0 728.9Z M765.2 730.3 L771.4 730.2 L777.6 730.3 L783.8 730.3 L780.7 732.2 L773.0 732.5 L766.7 731.4Z M755.9 715.1 L757.4 714.6 L762.1 712.4 L766.0 709.3 L768.3 706.5 L771.4 709.3 L769.9 710.7 L769.5 715.8 L767.5 719.7 L766.7 723.3 L764.4 723.6 L759.8 722.4 L757.4 721.9 L755.9 718.2Z M771.4 722.8 L772.2 716.6 L773.7 715.5 L780.4 715.1 L774.5 716.6 L773.0 719.0 L778.1 718.8 L775.3 720.4 L776.5 724.9 L774.5 724.4 L773.7 726.1Z M790.0 719.4 L794.7 718.6 L798.6 720.8 L805.6 721.4 L812.6 724.7 L815.7 727.0 L815.4 729.9 L820.3 733.5 L814.1 731.1 L810.2 729.4 L805.6 731.6 L802.5 730.0 L800.9 727.5 L797.8 724.9 L793.1 723.6 L791.4 721.8Z M654.9 553.3 L664.2 550.0 L676.7 548.5 L687.5 550.7 L676.7 554.3 L661.1 554.3Z M806.3 641.6 L812.6 645.6 L808.7 648.1 L804.8 649.2 L803.7 647.1Z M804.0 649.5 L806.3 650.8 L807.1 653.6 L805.6 657.2 L805.3 659.8 L802.5 661.3 L799.4 661.4 L796.3 663.4 L792.4 662.0 L790.0 662.0 L789.9 667.7 L788.8 666.8 L788.0 663.9 L792.4 660.2 L797.8 659.0 L799.4 656.8 L803.2 654.9 L803.9 650.8Z M773.0 688.3 L776.5 688.3 L776.1 692.3 L779.2 697.1 L775.3 695.8 L773.7 693.9Z M776.1 701.8 L779.2 699.5 L781.5 700.2 L781.5 702.6 L783.1 706.5 L781.5 708.4 L779.2 706.7 L776.1 706.5 L778.4 704.2Z M854.8 773.0 L857.6 775.5 L859.6 777.6 L863.8 778.9 L861.5 781.8 L859.9 785.3 L858.1 785.8 L858.4 782.1 L856.5 781.6 L857.8 778.5Z M854.8 784.0 L857.3 785.8 L855.6 788.6 L852.2 791.5 L849.1 795.5 L845.2 794.3 L848.3 790.5 L852.2 787.3Z M675.6 748.9 L676.4 749.4 L675.9 749.7Z"/>
<path fill="#ecd8fc" d="M395.1 634.5 L392.5 632.5 L388.6 630.9 L387.5 627.8 L384.7 623.1 L383.9 621.4 L384.7 620.1 L382.4 617.7 L380.1 614.3 L376.2 611.6 L373.1 613.2 L370.7 610.2 L367.6 610.2 L367.6 586.7 L370.7 586.9 L375.4 588.6 L378.5 586.7 L384.7 585.6 L389.4 585.0 L394.0 587.2 L400.2 588.3 L408.0 591.0 L415.8 591.0 L423.5 589.7 L434.4 591.5 L439.1 589.7 L440.6 586.9 L446.8 589.7 L449.9 593.1 L453.0 589.7 L459.3 586.9 L460.0 590.5 L457.7 595.5 L453.0 595.7 L450.7 600.0 L446.8 601.3 L441.4 607.4 L439.8 613.2 L442.9 617.7 L446.8 617.7 L454.6 621.4 L458.8 626.5 L461.6 629.9 L463.9 628.4 L464.2 623.1 L467.0 619.9 L466.2 614.3 L467.0 610.9 L465.5 605.4 L471.7 605.4 L474.8 607.4 L478.7 612.0 L481.8 614.3 L484.9 612.0 L486.6 610.0 L490.3 616.6 L493.4 621.0 L498.1 626.3 L500.1 628.4 L497.3 629.7 L493.4 632.1 L487.2 632.1 L482.5 633.9 L477.1 638.5 L479.4 635.9 L485.7 634.1 L486.9 635.1 L486.0 636.9 L485.7 638.5 L487.2 639.9 L491.1 641.0 L493.4 640.5 L492.6 641.4 L488.0 643.2 L484.4 645.1 L483.8 643.2 L486.4 641.8 L482.5 642.0 L481.3 638.3 L479.1 637.7 L477.9 639.1 L475.6 642.4 L470.6 642.4 L468.1 643.9 L463.6 645.6 L458.6 647.5 L458.5 641.8 L456.8 640.3 L455.2 639.5 L449.9 636.1 L447.6 636.5 L438.8 634.5Z M436.8 553.1 L444.6 548.0 L460.2 543.6 L475.7 543.2 L491.3 545.8 L482.7 551.4 L471.4 556.6 L465.4 560.9 L461.0 563.5 L452.4 562.7 L445.5 560.1 L438.6 556.6Z M436.8 565.2 L445.5 564.4 L462.8 565.2 L461.9 571.3 L445.5 572.2 L436.8 568.7Z M434.3 558.3 L440.3 560.1 L441.2 563.5 L436.8 563.5Z M395.4 567.0 L405.7 563.5 L413.5 560.1 L423.0 556.6 L432.5 559.2 L433.4 563.5 L436.0 569.6 L422.2 571.3 L410.1 572.2 L402.3 569.6Z M391.9 573.0 L405.7 573.0 L408.3 578.2 L402.3 579.9 L395.4 582.5 L391.0 579.1Z M402.3 577.3 L410.9 576.5 L422.2 574.7 L424.7 581.7 L429.9 586.0 L423.0 590.3 L409.2 590.3 L404.9 586.8Z M427.3 577.3 L436.0 573.9 L445.5 573.9 L440.3 581.7 L433.4 582.5 L427.3 579.9Z M447.0 576.5 L453.9 574.6 L467.5 576.5 L473.3 581.4 L482.0 586.2 L491.3 594.5 L486.9 598.9 L485.0 604.7 L481.2 603.7 L476.2 600.8 L473.3 596.9 L473.3 592.1 L468.4 589.2 L462.6 587.2 L457.7 585.8 L451.9 584.3 L448.0 581.4Z M452.9 596.9 L460.7 598.9 L461.6 602.8 L454.8 603.7 L451.9 600.8Z M415.0 552.5 L420.0 551.0 L421.5 554.0 L416.5 555.0Z M424.0 555.0 L428.0 554.0 L430.0 556.5 L425.5 557.0Z"/>
<path fill="#f3e1fb" d="M762.9 752.1 L763.6 758.7 L765.2 765.4 L766.0 771.4 L769.1 774.1 L774.5 772.0 L779.2 770.6 L782.3 769.4 L786.9 768.2 L791.6 768.8 L794.7 770.2 L797.2 773.7 L800.1 770.6 L800.6 775.3 L803.2 775.5 L804.8 779.4 L809.5 780.9 L813.8 781.4 L816.1 779.2 L819.5 778.5 L819.9 775.5 L821.9 771.4 L824.2 767.1 L825.1 763.1 L824.5 757.9 L821.1 754.6 L818.8 752.1 L814.1 747.3 L812.6 740.9 L809.5 739.3 L807.9 734.1 L806.3 738.5 L806.3 744.1 L803.2 744.9 L798.6 741.7 L799.1 736.4 L793.1 735.0 L789.3 736.1 L787.7 740.9 L783.1 739.3 L779.2 743.3 L776.5 744.9 L774.5 748.1 L770.6 749.4 L766.7 750.2Z M811.2 784.3 L816.9 784.7 L816.3 789.0 L813.3 789.7 L811.5 786.7Z"/>
<path fill="none" stroke-width="0.6" d="M404.7 665.1 L408.5 664.7 L414.2 667.2 L418.6 667.2 L421.2 666.3 L424.3 670.1 L426.6 671.1 L429.1 669.7 L432.1 673.6 L435.6 676.3 M443.4 694.7 L444.5 690.3 L448.1 689.5 L449.5 688.3 M448.1 689.5 L448.1 692.5 M447.8 694.9 L450.7 693.9 L454.6 694.7 L457.4 693.9 M453.5 699.9 L456.8 700.2 M457.7 704.3 L458.3 702.4 M631.5 588.3 L633.2 592.3 L632.4 596.2 L633.2 602.5 L635.5 605.0 L630.9 609.2 M629.8 612.3 L629.3 616.6 L630.4 619.5 L634.4 620.8 L636.0 626.3 L640.2 628.0 L641.7 631.7 L645.9 632.7 L648.7 633.5 L648.7 636.5 L646.4 638.1 M663.0 639.7 L662.2 635.5 L658.8 634.5 L660.4 631.5 L665.0 629.5 L672.0 631.1 L677.5 630.5 L682.1 630.9 L681.3 625.3 L687.5 622.9 L693.8 621.2 L700.7 625.3 L705.4 623.8 L707.7 627.4 L715.5 630.5 L722.2 634.3 M723.0 634.1 L726.4 631.5 L730.3 630.9 L738.0 632.9 L738.8 628.4 L745.0 629.9 L751.2 631.9 L754.3 633.9 L760.5 633.5 L767.8 632.9 M767.8 632.9 L773.0 625.7 L781.5 626.3 L784.6 632.5 L789.3 634.9 L793.9 636.1 L795.8 635.9 L793.3 642.2 L790.4 642.6 L789.4 647.3 M723.0 634.1 L727.1 637.5 L727.8 641.8 L734.9 643.9 L737.2 646.8 L744.2 647.1 L749.7 648.8 L758.2 647.1 L760.5 645.2 L764.4 641.4 L768.3 639.5 L772.6 639.1 L769.9 636.7 L767.8 632.9 M722.2 634.3 L719.4 638.5 L714.7 641.4 L710.8 642.6 L711.6 647.9 L704.6 651.0 L701.1 652.7 L702.8 656.6 L703.1 657.5 M668.9 648.1 L673.4 642.4 L673.6 649.4 L677.5 647.1 L681.3 643.5 L686.0 645.2 L692.2 649.9 L696.9 647.1 L700.7 646.2 L711.6 647.9 M703.1 657.5 L707.4 659.8 L710.1 665.1 L709.0 667.7 L712.4 669.0 L717.1 671.7 L723.6 672.9 L729.5 673.1 L734.1 671.1 L737.9 672.4 L739.9 676.3 L739.6 679.4 L743.8 683.5 L745.3 682.0 L752.3 681.4 L754.3 683.5 M656.2 652.3 L655.2 656.6 L657.3 661.6 L658.3 664.2 L661.1 668.5 M681.2 657.9 L681.6 659.7 L680.6 663.2 L681.2 669.7 L682.6 672.1 L684.9 674.9 L682.3 677.4 M697.2 657.7 L697.6 662.5 L694.2 666.1 L689.7 669.5 L683.7 670.4 M670.3 656.6 L675.1 655.0 L681.3 658.1 L687.5 656.3 L692.2 657.2 L697.2 657.7 L702.8 656.6 M702.3 661.6 L702.5 666.0 L702.3 667.7 L696.9 672.8 L694.5 675.3 L695.8 677.3 L693.4 679.1 M643.3 670.2 L647.2 665.6 L651.8 667.3 L656.0 670.7 L660.4 671.1 L661.8 671.9 M653.1 691.7 L658.8 690.3 L662.7 688.2 L667.4 687.5 L672.9 685.9 L672.9 681.5 L667.4 680.2 M667.4 687.5 L668.9 691.4 M642.8 657.9 L645.6 657.5 L651.0 656.8 L656.2 657.0 M652.3 657.0 L650.6 661.6 L647.2 665.4 L642.5 665.1 M651.0 649.0 L654.2 649.5 L658.8 649.9 L661.9 648.4 M656.2 652.3 L654.2 649.5 M583.8 645.4 L591.6 647.3 M575.7 656.8 L575.3 652.7 L572.9 648.1 M590.5 630.3 L593.1 632.5 L596.2 633.5 L599.3 634.5 L598.2 637.3 L595.9 640.1 L597.5 640.7 L598.2 644.7 M595.9 625.7 L597.2 628.4 L595.8 630.9 L596.2 633.5 M600.0 622.3 L601.4 622.5 M608.7 624.4 L609.3 630.5 L605.4 631.9 L608.0 635.1 L606.5 637.3 L602.1 637.9 L598.4 637.3 M609.9 630.7 L615.8 633.5 L621.7 634.3 M623.1 624.2 L623.3 628.0 L623.9 631.5 L621.7 634.3 M623.3 629.5 L634.0 629.9 L640.2 628.0 M621.1 635.7 L627.9 635.9 L630.4 636.1 L633.2 639.5 L630.4 641.4 M604.9 612.0 L606.0 607.4 L605.2 603.7 L609.1 597.0 L613.0 591.0 L618.4 588.0 M623.9 596.8 L623.4 591.0 L618.4 588.0 M618.4 588.0 L623.9 589.4 L631.5 588.3 M597.5 640.7 L602.9 639.5 L607.9 639.5 M607.9 639.5 L612.2 639.5 L616.1 640.7 L621.5 643.7 L622.3 645.2 L621.5 647.5 L618.4 648.6 L616.9 649.0 M617.7 652.3 L619.2 650.3 L623.9 649.0 L627.8 648.6 M612.8 635.3 L621.1 635.7 M621.5 643.7 L630.9 644.7 M619.4 619.9 L627.9 620.6 L630.4 619.5 M619.4 617.7 L629.3 616.6 M584.0 660.7 L584.7 665.1 L580.9 668.2 L573.1 672.8 M573.1 673.3 L566.1 673.3 M573.1 673.9 L579.1 677.8 L576.5 677.9 L578.1 691.5 L578.1 693.1 L568.0 694.7 L561.0 691.5 M600.0 657.4 L599.5 661.4 L601.4 665.4 L602.1 669.2 L601.7 672.8 L601.4 675.6 L605.1 680.2 M625.4 666.6 L625.4 682.7 L644.1 682.7 M605.1 680.2 L609.9 681.0 L623.9 686.7 L625.4 685.9 L625.4 682.7 M579.1 677.8 L588.5 684.6 L592.0 687.2 L595.9 686.7 L605.1 680.2 M592.8 692.3 L588.2 693.9 L583.5 693.9 L578.1 693.1 M609.9 681.0 L610.7 685.9 L607.6 695.5 M623.9 686.7 L621.5 695.5 L620.8 697.9 L623.1 701.8 M623.1 701.8 L628.5 702.6 L638.6 701.8 M609.1 709.6 L611.4 711.2 L615.5 712.0 L621.5 710.9 L629.3 709.6 L634.4 712.0 M599.8 710.4 L601.4 707.3 L605.2 704.2 L608.3 697.9 M605.5 726.7 L613.8 729.9 L620.8 734.6 L623.9 734.6 L630.9 730.6 L632.4 726.7 L632.4 719.0 L633.2 714.3 L634.7 711.8 M604.9 744.4 L618.4 745.3 L623.1 745.7 M647.5 724.7 L639.4 719.0 L632.4 719.0 M637.8 704.9 L641.0 709.6 L651.8 711.2 L656.5 709.6 L661.1 704.9 L653.4 700.2 M644.1 682.7 L643.3 694.7 L639.4 702.6 L637.8 704.9 M620.8 742.5 L625.4 745.3 L633.2 741.8 L637.8 739.3 L641.0 735.3 M613.0 762.9 L617.7 757.0 L617.7 752.1 L625.4 757.9 L631.6 752.5 L635.5 752.9 L636.3 760.0 M568.7 697.9 L574.2 701.8 L578.8 701.8 L581.9 709.6 M582.3 700.2 L586.6 700.2 L588.9 700.2 L592.2 699.1 L592.8 696.3 M601.8 711.5 L604.1 714.0 L609.1 714.0 L611.4 711.2 M474.2 699.0 L474.2 704.9 L481.8 707.8 L482.5 715.1 M477.9 715.8 L482.5 714.3 L487.2 711.2 L493.4 709.6 L498.1 714.3 L502.7 714.0 L506.5 710.9 M472.5 724.4 L477.1 732.2 L478.7 734.6 L485.2 733.8 L493.4 738.5 L496.5 743.3 L497.3 748.9 M463.9 715.5 L470.1 717.7 L472.5 719.7 L477.9 723.9 M461.9 722.8 L464.7 725.2 L469.3 719.7 M479.4 737.7 L478.7 744.9 L481.0 750.5 L482.5 753.8 M481.0 752.1 L480.2 760.4 L477.9 770.6 L476.3 777.6 L475.6 786.7 L474.8 796.3 L473.2 802.3 L480.2 807.4 M482.5 752.9 L489.5 752.5 L493.4 749.7 L496.5 748.9 M489.5 752.5 L496.5 757.0 L501.2 760.4 M501.2 754.6 L502.0 758.7 L503.4 760.7 L498.1 765.8 L503.5 771.6 M743.5 681.9 L748.9 685.1 L750.4 688.3 L753.5 693.9 L751.2 695.5 M746.6 695.0 L745.8 698.7 M739.6 701.8 L740.3 691.5 L741.9 685.1 M805.6 721.4 L805.6 731.6 M757.0 714.4 L765.2 715.1 L769.1 710.9"/>
<path fill="#d4d8ec" stroke="#fff" d="M659.6 642.8 L664.2 639.5 L668.9 638.9 L668.9 642.0 L666.6 643.3 L668.4 648.1 L670.5 650.3 L668.9 652.7 L670.5 656.6 L665.8 657.7 L662.7 655.4 L663.5 651.4 L660.4 647.1Z"/>
</g></svg>
<svg class="abs" style="left:471px;top:911px" width="9" height="9" viewBox="0 0 9 9"><path d="M4.5 1 L7 4.5 L4.5 8 L2 4.5Z" fill="#e0262a"/></svg>
<div class="abs" style="left:1050px;top:909px;width:1px;height:17px;background:#c9c6c4"></div>
<div class="abs" style="left:1050px;top:920px;width:1px;height:6px;background:#2a3a76"></div>
<div class="abs" style="left:1379px;top:910px;width:460px;height:1px;background:#d6d2c8"></div>
<div class="abs" style="left:1522px;top:911px;width:1px;height:15px;background:#d6d2c8"></div>
<div class="abs" style="left:852.0px;top:801.0px;width:18px;height:18px;border-radius:50%;box-shadow:0 2px 4px rgba(0,0,0,.18)"></div><svg class="fb" style="left:852.0px;top:801.0px" width="18" height="18" viewBox="0 0 18 18"><circle cx="9" cy="9" r="9" fill="#97c8ef"/><path d="M4.6 6.7 H12.6 L9.7 10 V13 L7.7 13.9 V10Z" fill="none" stroke="#fff" stroke-width="1.15" stroke-linejoin="round"/></svg>
<div class="abs" style="left:1839.0px;top:801.0px;width:18px;height:18px;border-radius:50%;box-shadow:0 2px 4px rgba(0,0,0,.18)"></div><svg class="fb" style="left:1839.0px;top:801.0px" width="18" height="18" viewBox="0 0 18 18"><circle cx="9" cy="9" r="9" fill="#97c8ef"/><path d="M4.6 6.7 H12.6 L9.7 10 V13 L7.7 13.9 V10Z" fill="none" stroke="#fff" stroke-width="1.15" stroke-linejoin="round"/></svg>
</body></html>
